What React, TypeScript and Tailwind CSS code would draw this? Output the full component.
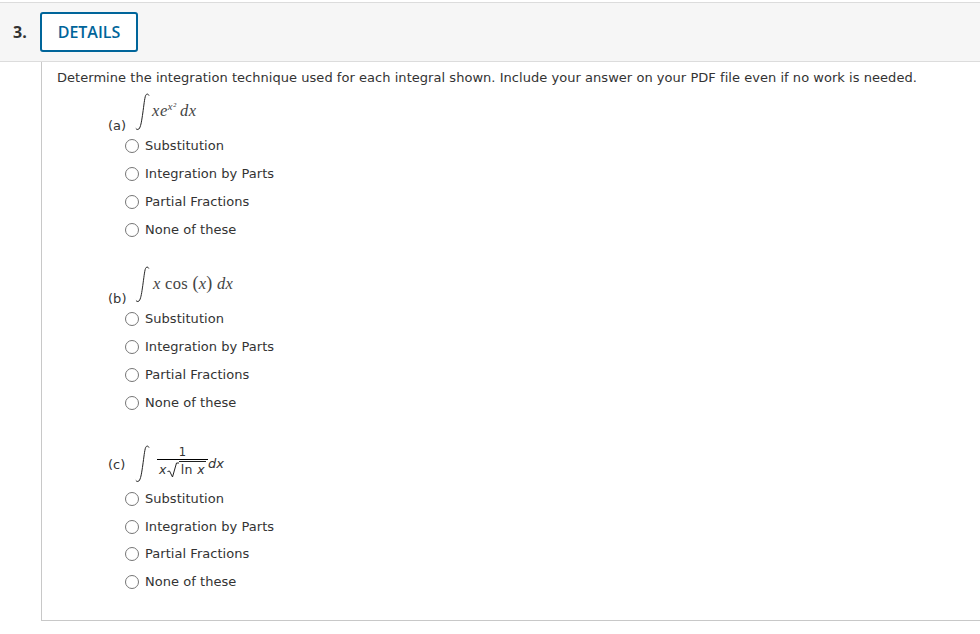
const sans = "font-['DejaVu_Sans',sans-serif]";
const body = "text-[13px] tracking-[0.04px] text-[#333]";

const choices = ["Substitution", "Integration by Parts", "Partial Fractions", "None of these"];

function IntegralSign({ className }: { className: string }) {
  return (
    <svg viewBox="0 0 16 38" className={className} fill="none">
      <path
        d="M15 2.6 C14.2 0.6 12.4 0.6 11.6 2.6 C10.6 5 9.8 13 8.8 20 C7.8 27 7 32.5 5.6 35 C4.8 36.8 2.8 37 1.8 35.4"
        stroke="#222"
        strokeWidth="1"
      />
    </svg>
  );
}

function Choices({ rowClass = "h-[28px]" }: { rowClass?: string }) {
  return (
    <div className="flex flex-col pl-[17px]">
      {choices.map((label) => (
        <label key={label} className={`flex items-center gap-[6px] ${rowClass}`}>
          <span className="h-[14px] w-[14px] rounded-full border-[1.5px] border-[#767676] bg-white" />
          <span className={body}>{label}</span>
        </label>
      ))}
    </div>
  );
}

function MathA() {
  return (
    <div className="flex h-[45px] items-end">
      <span className={`mb-[-3px] w-[26px] ${body}`}>(a)</span>
      <IntegralSign className="mb-[1px] h-[38px] w-[16px]" />
      <span className="mb-[13px] ml-[2px] font-['Liberation_Serif',serif] text-[16.5px] italic leading-none tracking-[0.6px] text-[#444]">
        xe<sup className="text-[10.5px] leading-none">x²</sup>
        <span className="ml-[3px]">dx</span>
      </span>
    </div>
  );
}

function MathB() {
  return (
    <div className="flex h-[61px] items-end">
      <span className={`mb-[-3px] w-[26px] ${body}`}>(b)</span>
      <IntegralSign className="mb-[2px] h-[37px] w-[16px]" />
      <span className="mb-[13px] ml-[3px] font-['Liberation_Serif',serif] text-[16.5px] leading-none tracking-[0.3px] text-[#444]">
        <i>x</i> cos <span className="text-[18px]">(</span><i>x</i><span className="text-[18px]">)</span> <i>dx</i>
      </span>
    </div>
  );
}

function MathC() {
  return (
    <div className="flex h-[68px] items-end">
      <span className={`mb-[11px] w-[26px] ${body}`}>(c)</span>
      <IntegralSign className="mb-[2px] h-[38px] w-[16px]" />
      <div className="mb-[7px] ml-[7px] flex w-[51px] flex-col items-center">
        <span className="w-full border-b border-black text-center text-[11.5px] leading-[14px] text-[#333]">1</span>
        <span className="flex h-[18px] items-end text-[12.5px] leading-[16px] tracking-[0.4px] text-[#333]">
          <i>x</i>
          <svg viewBox="0 0 12 16" className="h-[16px] w-[12px]" fill="none">
            <path d="M0.5 9.5 L2.5 9 L5.5 15 L9.5 1 L12 1" stroke="#222" strokeWidth="1" />
          </svg>
          <span className="border-t border-[#222] pl-[2px] pr-[1px]">ln <i>x</i></span>
        </span>
      </div>
      <i className={`mb-[15px] leading-none ${body}`}>dx</i>
    </div>
  );
}

export default function App() {
  return (
    <div className={`h-[634px] overflow-hidden bg-white pt-[2px] ${sans}`}>
      {/* Question header */}
      <div className="flex h-[60px] items-center border-y border-[#dcdcdc] bg-[#f6f6f6]">
        <span className="ml-[13px] w-[27px] font-['Open_Sans',sans-serif] text-[16px] font-bold text-[#333]">3.</span>
        <button className="h-[40px] w-[98px] rounded-[3px] border-2 border-[#00659a] bg-white font-['Open_Sans',sans-serif] text-[16px] font-semibold text-[#00659a]">
          DETAILS
        </button>
      </div>

      {/* Question body */}
      <div className="ml-[41px] h-[559px] border-b border-l border-[#c8c8c8] pl-[15px] pt-[6px]">
        <p className={`leading-[19px] ${body}`}>
          Determine the integration technique used for each integral shown. Include your answer on your PDF file even if no work is needed.
        </p>
        <div className="pl-[51px]">
          <MathA />
          <Choices />
          <MathB />
          <Choices />
          <MathC />
          <Choices rowClass="h-[27.7px]" />
        </div>
      </div>
    </div>
  );
}
